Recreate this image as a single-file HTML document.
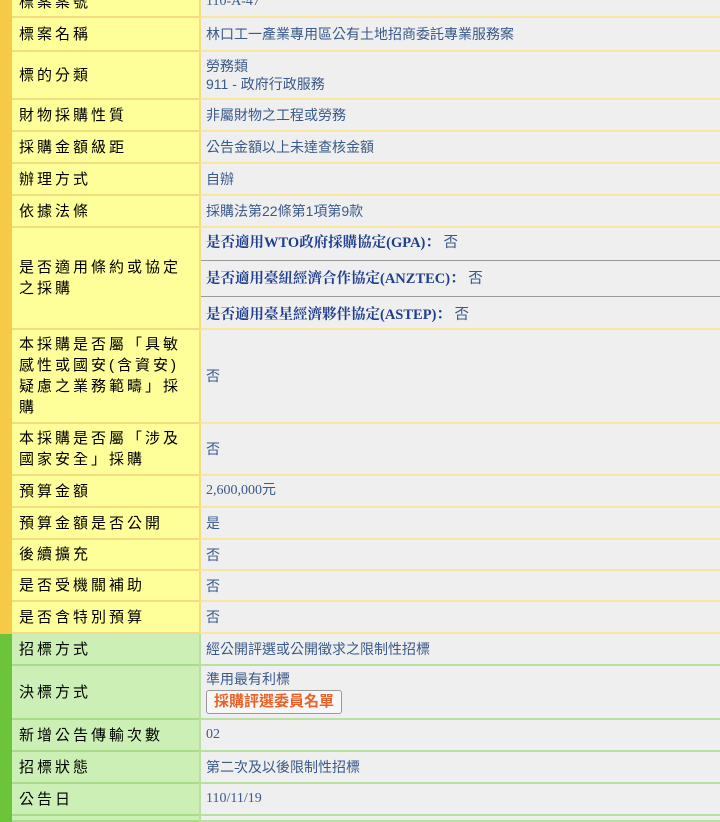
<!DOCTYPE html>
<html style="width:720px;height:822px;overflow:hidden"><head><meta charset="utf-8"><style>
body{margin:0;width:720px;height:822px;overflow:hidden;background:#f0f0f0;font-family:"Liberation Sans","Noto Sans CJK TC",sans-serif;position:relative}
.r{position:absolute;left:0;width:720px;box-sizing:border-box}
.bar{position:absolute;left:0;width:12px}
.l{position:absolute;left:12px;width:187px;top:0;bottom:0;box-sizing:border-box;padding-left:7px;font-size:15px;letter-spacing:3px;color:#000;display:flex;align-items:center;line-height:21px;font-weight:400}
.v{position:absolute;left:199px;right:0;top:0;bottom:0;box-sizing:border-box;padding-left:5px;font-size:14px;color:#3a5a8a;display:flex;align-items:center;line-height:18px;border-left:2px solid #f3dd80}
.y .l{background:#ffff99;border-bottom:2px solid #f3dd80}
.y .v{background:#efefef;border-bottom:2px solid #f7e5a0}
.g .l{background:#ccefb6;border-bottom:2px solid #a8dc88}
.g .v{background:#efefef;border-bottom:2px solid #b8e0a0;border-left-color:#b8e0a0}
.b{font-family:"Liberation Serif","Noto Serif CJK SC",serif;font-weight:bold;color:#1f3f8f;font-size:14.5px}
.n{font-family:"Liberation Serif",serif;font-weight:normal;color:#3a5a8a}
</style></head><body>
<div class="bar" style="top:0;height:634px;background:#f7c948"></div>
<div class="bar" style="top:634px;height:188px;background:#6cc43a"></div>

<div class="r y" style="top:-12px;height:30px"><div class="l">標案案號</div><div class="v" style="font-family:'Liberation Serif',serif">110-A-47</div></div>
<div class="r y" style="top:18px;height:34px"><div class="l">標案名稱</div><div class="v">林口工一產業專用區公有土地招商委託專業服務案</div></div>
<div class="r y" style="top:52px;height:48px"><div class="l">標的分類</div><div class="v">勞務類<br>911 - 政府行政服務</div></div>
<div class="r y" style="top:100px;height:32px"><div class="l">財物採購性質</div><div class="v">非屬財物之工程或勞務</div></div>
<div class="r y" style="top:132px;height:32px"><div class="l">採購金額級距</div><div class="v">公告金額以上未達查核金額</div></div>
<div class="r y" style="top:164px;height:32px"><div class="l">辦理方式</div><div class="v">自辦</div></div>
<div class="r y" style="top:196px;height:32px"><div class="l">依據法條</div><div class="v">採購法第22條第1項第9款</div></div>
<div class="r y" style="top:228px;height:102px"><div class="l" style="padding-right:8px">是否適用條約或協定之採購</div><div class="v" style="display:block;padding:0">
<div class="b" style="height:32px;line-height:30px;padding-left:5px;border-bottom:1px solid #999">是否適用WTO政府採購協定(GPA)： <span class="n">否</span></div>
<div class="b" style="height:35px;line-height:36px;padding-left:5px;border-bottom:1px solid #999">是否適用臺紐經濟合作協定(ANZTEC)： <span class="n">否</span></div>
<div class="b" style="height:30px;line-height:36px;padding-left:5px">是否適用臺星經濟夥伴協定(ASTEP)： <span class="n">否</span></div>
</div></div>
<div class="r y" style="top:330px;height:94px"><div class="l" style="padding-right:8px">本採購是否屬「具敏感性或國安(含資安)疑慮之業務範疇」採購</div><div class="v">否</div></div>
<div class="r y" style="top:424px;height:52px"><div class="l" style="padding-right:8px">本採購是否屬「涉及國家安全」採購</div><div class="v">否</div></div>
<div class="r y" style="top:476px;height:32px"><div class="l">預算金額</div><div class="v" style="font-family:'Liberation Serif','Noto Sans CJK TC',serif">2,600,000元</div></div>
<div class="r y" style="top:508px;height:32px"><div class="l">預算金額是否公開</div><div class="v">是</div></div>
<div class="r y" style="top:540px;height:31px"><div class="l">後續擴充</div><div class="v">否</div></div>
<div class="r y" style="top:571px;height:31px"><div class="l">是否受機關補助</div><div class="v">否</div></div>
<div class="r y" style="top:602px;height:32px"><div class="l">是否含特別預算</div><div class="v">否</div></div>
<div class="r g" style="top:634px;height:32px"><div class="l">招標方式</div><div class="v">經公開評選或公開徵求之限制性招標</div></div>
<div class="r g" style="top:666px;height:54px"><div class="l">決標方式</div><div class="v" style="display:block;padding-top:4px">準用最有利標<br><span style="display:inline-block;margin-top:2px;border:1px solid #999;border-radius:3px;background:#f7f7f7;color:#e8622a;font-weight:bold;font-size:15px;padding:1px 7px;line-height:20px">採購評選委員名單</span></div></div>
<div class="r g" style="top:720px;height:32px"><div class="l">新增公告傳輸次數</div><div class="v" style="font-family:'Liberation Serif',serif">02</div></div>
<div class="r g" style="top:752px;height:32px"><div class="l">招標狀態</div><div class="v">第二次及以後限制性招標</div></div>
<div class="r g" style="top:784px;height:32px"><div class="l">公告日</div><div class="v" style="font-family:'Liberation Serif',serif">110/11/19</div></div>
<div class="r g" style="top:816px;height:6px"><div class="l"></div><div class="v"></div></div>
</body></html>
